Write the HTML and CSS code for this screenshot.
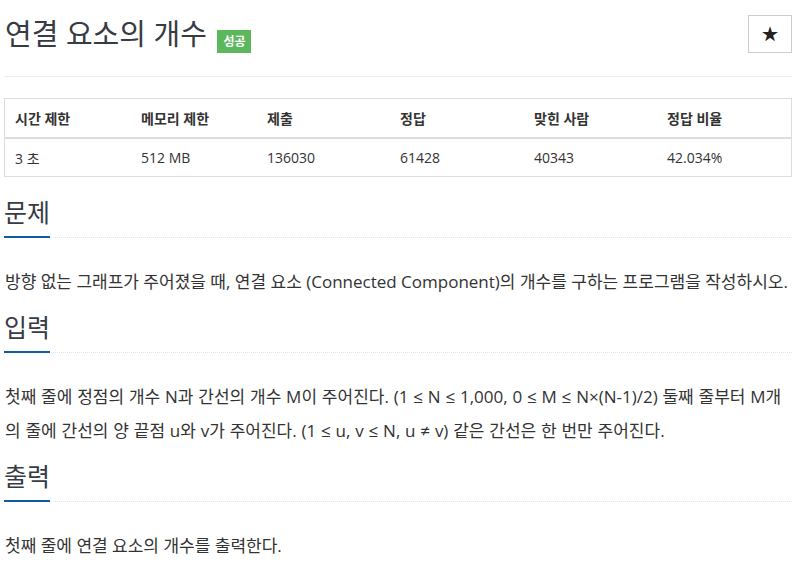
FILE: index.html
```html
<!DOCTYPE html>
<html lang="ko">
<head>
  <meta charset="UTF-8">
  <title>연결 요소의 개수</title>
  <link rel="stylesheet" href="styles.css">
</head>
<body>
  <div class="container">
    <div class="page-header">
      <h1>연결 요소의 개수 <span class="label-success">성공</span></h1>
      <button class="star-btn">★</button>
    </div>

    <table class="problem-info">
      <thead>
        <tr>
          <th class="c1">시간 제한</th>
          <th class="c2">메모리 제한</th>
          <th class="c3">제출</th>
          <th class="c4">정답</th>
          <th class="c5">맞힌 사람</th>
          <th>정답 비율</th>
        </tr>
      </thead>
      <tbody>
        <tr>
          <td>3 초</td>
          <td>512 MB</td>
          <td>136030</td>
          <td>61428</td>
          <td>40343</td>
          <td>42.034%</td>
        </tr>
      </tbody>
    </table>

    <section class="problem-section">
      <div class="headline"><h2>문제</h2></div>
      <p>방향 없는 그래프가 주어졌을 때, 연결 요소 (Connected Component)의 개수를 구하는 프로그램을 작성하시오.</p>
    </section>

    <section class="problem-section">
      <div class="headline"><h2>입력</h2></div>
      <p class="input-text">첫째 줄에 정점의 개수 N과 간선의 개수 M이 주어진다. (1 ≤ N ≤ 1,000, 0 ≤ M ≤ N×(N-1)/2) 둘째 줄부터 M개의 줄에 간선의 양 끝점 u와 v가 주어진다. (1 ≤ u, v ≤ N, u ≠ v) 같은 간선은 한 번만 주어진다.</p>
    </section>

    <section class="problem-section">
      <div class="headline"><h2>출력</h2></div>
      <p>첫째 줄에 연결 요소의 개수를 출력한다.</p>
    </section>
  </div>
</body>
</html>
```

FILE: styles.css
```css
body {
  margin: 0;
  font-family: 'Open Sans', 'Noto Sans CJK KR', sans-serif;
  color: #333;
  background: #fff;
}
.container {
  padding: 0 8px 0 4px;
}
.page-header {
  display: flex;
  justify-content: space-between;
  align-items: flex-start;
  padding: 14px 0 22px;
  border-bottom: 1px solid #eee;
}
.page-header h1 {
  margin: 0;
  font-size: 29px;
  font-weight: 400;
  color: #363b44;
  line-height: 40px;
  padding-left: 1px;
}
.label-success {
  display: inline-block;
  background: #5cb85c;
  color: #fff;
  font-size: 12px;
  font-weight: 700;
  padding: 3px 6px;
  line-height: 17px;
  vertical-align: -1px;
  margin-left: 3px;
}
.star-btn {
  width: 44px;
  height: 38px;
  margin-top: 1px;
  background: #fff;
  border: 1px solid #ccc;
  font-size: 18px;
  color: #222;
  cursor: pointer;
}
.problem-info {
  width: 100%;
  margin: 21px 0 20px;
  border-collapse: collapse;
  border: 1px solid #ddd;
  table-layout: fixed;
  font-size: 14px;
}
.problem-info th,
.problem-info td {
  text-align: left;
  padding: 0 10px;
  border-top: 1px solid #ddd;
}
.problem-info th {
  height: 38px;
  font-weight: 700;
  border-bottom: 2px solid #ddd;
}
.problem-info td {
  height: 37px;
}
.c1, .c2 { width: 106px; }
.c3 { width: 113px; }
.c4 { width: 114px; }
.c5 { width: 113px; }
.problem-section {
  margin-top: 13px;
}
.headline {
  border-bottom: 1px dotted #dfe3ec;
}
.headline h2 {
  display: inline-block;
  margin: 0 0 -1px;
  font-size: 25px;
  font-weight: 400;
  color: #363b44;
  line-height: 30px;
  padding-bottom: 9px;
  border-bottom: 2px solid #0e5aa7;
}
.problem-section p {
  margin: 27px 0 0;
  padding: 0 3px 0 1px;
  font-size: 17px;
  line-height: 34px;
}
.input-text {
  word-spacing: 0.4px;
}
```
